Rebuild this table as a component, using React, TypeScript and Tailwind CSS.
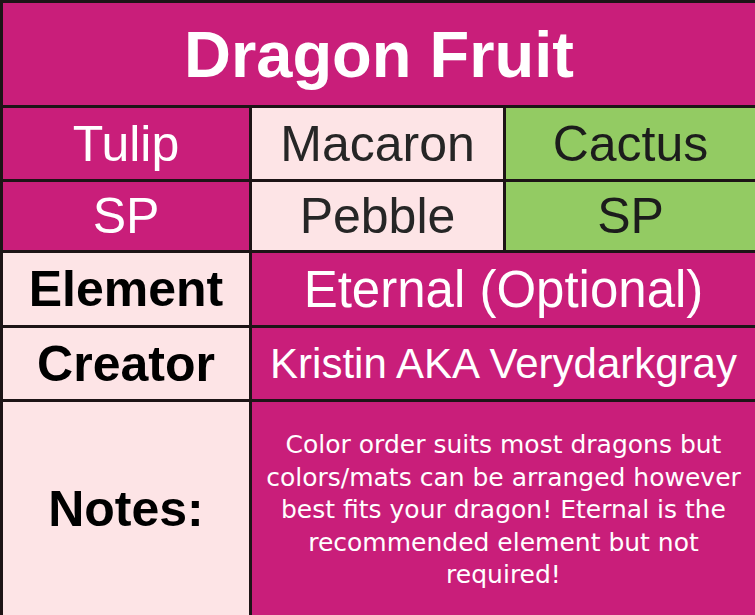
const magenta = 'bg-[#c91e7a]'

export default function App() {
  return (
    <div className="w-[755px] h-[615px] overflow-hidden bg-[#c91e7a] font-['Liberation_Sans',Arial,sans-serif]">
      <div className="grid grid-cols-[246px_251px_249px] grid-rows-[102px_71px_68px_72px_71px_213px] gap-[3px] pt-[3px] pl-[3px] bg-[#1d1416] w-[758px]">
        {/* title */}
        <div className={`col-span-3 ${magenta} flex items-center justify-center text-white font-bold text-[65px] leading-none`}>
          Dragon Fruit
        </div>

        {/* colours */}
        <div className={`${magenta} flex items-center justify-center text-white text-[50px] leading-none`}>Tulip</div>
        <div className="bg-[#fde4e6] flex items-center justify-center text-[#262626] text-[50px] leading-none">Macaron</div>
        <div className="bg-[#93cb63] flex items-center justify-center text-[#1c1c1c] text-[50px] leading-none">Cactus</div>

        {/* mats */}
        <div className={`${magenta} flex items-center justify-center text-white text-[50px] leading-none`}>SP</div>
        <div className="bg-[#fde4e6] flex items-center justify-center text-[#262626] text-[50px] leading-none">Pebble</div>
        <div className="bg-[#93cb63] flex items-center justify-center text-[#1c1c1c] text-[50px] leading-none">SP</div>

        {/* element */}
        <div className="bg-[#fde4e6] flex items-center justify-center text-black font-bold text-[50px] leading-none">Element</div>
        <div className={`col-span-2 ${magenta} flex items-center justify-center text-white text-[51px] leading-none`}>
          Eternal (Optional)
        </div>

        {/* creator */}
        <div className="bg-[#fde4e6] flex items-center justify-center text-black font-bold text-[50px] leading-none">Creator</div>
        <div className={`col-span-2 ${magenta} flex items-center justify-center text-white text-[42px] leading-none`}>
          Kristin AKA Verydarkgray
        </div>

        {/* notes */}
        <div className="bg-[#fde4e6] flex items-center justify-center text-black font-bold text-[50px] leading-none">Notes:</div>
        <div className={`col-span-2 ${magenta} flex items-center justify-center`}>
          <p className="text-white text-center text-[25px] leading-[32.5px] font-['DejaVu_Sans',sans-serif] w-[503px] mt-[4px]">
            Color order suits most dragons but<br />
            colors/mats can be arranged however<br />
            best fits your dragon! Eternal is the<br />
            recommended element but not<br />
            required!
          </p>
        </div>
      </div>
    </div>
  )
}
